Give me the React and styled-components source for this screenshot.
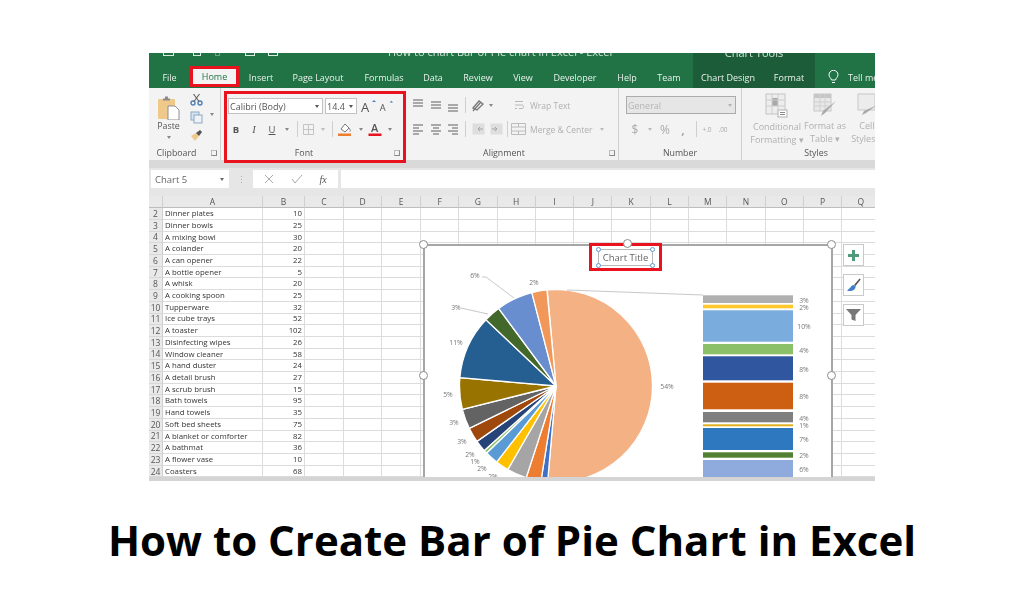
import { Fragment } from "react";
import styled, { createGlobalStyle } from "styled-components";

const GlobalStyle = createGlobalStyle`
  html, body {
    margin: 0;
    padding: 0;
    background: #fff;
  }
  * {
    box-sizing: border-box;
  }
`;

const RED = "#e8131f";
const GREEN = "#217346";
const DARK_GREEN = "#1c5c39";

const Page = styled.div`
  width: 1024px;
  height: 613px;
  padding-top: 53px;
  display: flex;
  flex-direction: column;
  align-items: center;
  overflow: hidden;
  font-family: "Open Sans", sans-serif;
`;

const Shot = styled.div`
  width: 726px;
  height: 428px;
  flex: none;
  overflow: hidden;
  display: flex;
  flex-direction: column;
  background: #e6e6e6;
  filter: blur(0.7px);
`;

const Heading = styled.h1`
  margin: 36px 0 0;
  font-size: 42px;
  line-height: 46px;
  font-weight: 700;
  color: #000;
  white-space: nowrap;
`;

const TitleBar = styled.div`
  height: 13px;
  flex: none;
  display: flex;
  background: ${GREEN};
  overflow: hidden;
  color: #cfe3d7;
  font-size: 11px;
  line-height: 6px;
`;

const QuickIcons = styled.div`
  width: 239px;
  display: flex;
  padding-left: 14px;
  flex: none;
`;

const QuickMark = styled.span`
  width: ${(p) => p.$w}px;
  height: 3px;
  margin-left: ${(p) => p.$gap || 0}px;
  border: 1px solid ${(p) => (p.$dim ? "#6fa287" : "#dcebe2")};
  border-top: 0;
`;

const WindowTitle = styled.div`
  width: 305px;
  flex: none;
  margin-top: -4px;
  white-space: nowrap;
`;

const ToolsTitle = styled.div`
  width: 122px;
  flex: none;
  padding-top: 0;
  text-align: center;
  background: ${DARK_GREEN};
  line-height: 0;
`;

const TabBar = styled.div`
  height: 22px;
  flex: none;
  display: flex;
  background: ${GREEN};
`;

const Tab = styled.div`
  width: ${(p) => p.$w}px;
  flex: none;
  display: flex;
  align-items: center;
  justify-content: center;
  font-size: 9px;
  color: #e9f2ed;
  white-space: nowrap;
  background: ${(p) => (p.$tool ? DARK_GREEN : "transparent")};
`;

const HomeTab = styled(Tab)`
  height: 21px;
  background: #f3f3f3;
  color: ${GREEN};
  border: 3px solid ${RED};
  position: relative;
  z-index: 2;
`;

const TellMe = styled.div`
  display: flex;
  align-items: center;
  gap: 9px;
  padding-left: 13px;
  color: #e9f2ed;
  font-size: 9px;
  white-space: nowrap;
`;

const Ribbon = styled.div`
  height: 72px;
  flex: none;
  display: flex;
  background: #f3f3f3;
  color: #444;
`;

const Group = styled.div`
  width: ${(p) => p.$w}px;
  height: 72px;
  flex: none;
  display: flex;
  flex-direction: column;
  padding-top: ${(p) => p.$top ?? 8}px;
  border-right: ${(p) => (p.$line ? "1px solid #cfcfcf" : "0")};
`;

const FontGroup = styled(Group)`
  margin: 3px 0 0 3px;
  padding: 4px 0 0;
  border: 3px solid ${RED};
  position: relative;
  z-index: 2;
  background: #f3f3f3;
`;

const GroupLabel = styled.div`
  margin-top: auto;
  height: 14px;
  display: grid;
  grid-template-columns: 0 1fr ${(p) => p.$right ?? 16}px;
  align-items: center;
  text-align: center;
  font-size: 8.8px;
  color: #555;
`;

const Launcher = styled.span`
  justify-self: end;
  margin-right: 3px;
  width: 6px;
  height: 6px;
  border-left: 1px solid #bbb;
  border-top: 1px solid #bbb;
  border-right: 1px solid #888;
  border-bottom: 1px solid #888;
`;

const ToolRow = styled.div`
  height: ${(p) => p.$h || 18}px;
  flex: none;
  display: flex;
  align-items: center;
  padding-left: ${(p) => p.$left || 0}px;
  margin-top: ${(p) => p.$gap || 0}px;
`;

const Cell = styled.div`
  width: ${(p) => p.$w}px;
  flex: none;
  display: flex;
  align-items: center;
  justify-content: center;
  font-family: ${(p) => (p.$serif ? '"Liberation Serif", serif' : "inherit")};
  font-size: ${(p) => p.$size || 10}px;
  font-weight: ${(p) => (p.$bold ? 700 : 400)};
  font-style: ${(p) => (p.$italic ? "italic" : "normal")};
  text-decoration: ${(p) => (p.$under ? "underline" : "none")};
  color: ${(p) => p.$color || "#555"};
`;

const Caret = styled.span`
  width: 0;
  height: 0;
  border-left: 2.5px solid transparent;
  border-right: 2.5px solid transparent;
  border-top: 3px solid ${(p) => p.$color || "#888"};
`;

const ToolSep = styled.span`
  width: 1px;
  height: 16px;
  background: #cfcfcf;
`;

const Select = styled.div`
  width: ${(p) => p.$w}px;
  height: ${(p) => p.$h || 16}px;
  flex: none;
  margin-right: ${(p) => p.$gap || 0}px;
  display: flex;
  align-items: center;
  justify-content: space-between;
  padding: 0 3px 0 1px;
  background: ${(p) => (p.$off ? "#e6e6e6" : "#fff")};
  border: 1px solid ${(p) => (p.$off ? "#ababab" : "#c2c2c2")};
  font-size: 9px;
  color: ${(p) => (p.$off ? "#b4b4b4" : "#555")};
  white-space: nowrap;
`;

const DimText = styled.div`
  display: flex;
  align-items: center;
  width: ${(p) => p.$w}px;
  flex: none;
  justify-content: space-between;
  margin-left: 3px;
  padding-right: 9px;
  font-size: 8.5px;
  color: #b0b0b0;
  white-space: nowrap;
`;

const ClipboardBody = styled.div`
  display: grid;
  grid-template-columns: 37px 18px 14px;
  padding-left: 1px;
`;

const PasteButton = styled.div`
  display: flex;
  flex-direction: column;
  align-items: center;
  padding-top: 3px;
  font-size: 8.8px;
  line-height: 12px;
  color: #555;
`;

const PasteCaret = styled(Caret)`
  margin-top: 4px;
`;

const SmallTools = styled.div`
  display: flex;
  flex-direction: column;
  align-items: center;
  gap: 5px;
  grid-column: 2;
`;

const SmallCaret = styled.div`
  display: flex;
  align-items: center;
  justify-content: center;
  padding-bottom: 7px;
`;

const BigTools = styled.div`
  display: flex;
  padding-left: ${(p) => p.$left}px;
`;

const BigTool = styled.div`
  width: ${(p) => p.$w}px;
  flex: none;
  display: flex;
  flex-direction: column;
  align-items: center;
  font-size: 9px;
  line-height: 13px;
  color: #b0b0b0;
  white-space: nowrap;
`;

const BigLabel = styled.div`
  margin-top: 2px;
  display: flex;
  flex-direction: column;
  align-items: center;
`;

const Strip = styled.div`
  height: 8px;
  flex: none;
  background: #d9d9d9;
`;

const FormulaBar = styled.div`
  height: 20px;
  flex: none;
  display: flex;
  align-items: flex-start;
  padding: 2px 0 0 2px;
  background: #e6e6e6;
`;

const NameBox = styled.div`
  width: 78px;
  height: 18px;
  flex: none;
  display: flex;
  align-items: center;
  justify-content: space-between;
  padding: 0 5px 0 4px;
  background: #fff;
  font-size: 9.5px;
  color: #666;
`;

const GripDots = styled.div`
  width: 24px;
  height: 18px;
  flex: none;
  display: flex;
  align-items: center;
  justify-content: center;
  color: #aaa;
  font-size: 9px;
`;

const FnBox = styled.div`
  width: 85px;
  height: 18px;
  flex: none;
  display: flex;
  align-items: center;
  justify-content: space-around;
  padding: 0 3px;
  background: #fff;
  margin-right: 3px;
  color: #aaa;
`;

const FnLabel = styled.span`
  font-family: "Liberation Serif", serif;
  font-style: italic;
  font-size: 10px;
  color: #555;
`;

const FormulaInput = styled.div`
  flex: 1;
  height: 18px;
  background: #fff;
`;

const Gap = styled.div`
  height: 8px;
  flex: none;
`;

const Sheet = styled.div`
  position: relative;
  height: 281px;
  flex: none;
  background: #fff;
`;

const Grid = styled.div`
  display: grid;
  grid-template-columns: 14px 100px 42px 39px 38px 39px repeat(12, 38.3px);
  grid-template-rows: 12.2px repeat(23, 11.71px);
  height: 281px;
`;

const ColHead = styled.div`
  background: #e9e9e9;
  border-right: 1px solid #cfcfcf;
  border-bottom: 1px solid #bdbdbd;
  display: flex;
  align-items: center;
  justify-content: center;
  font-size: 8.5px;
  color: #555;
`;

const RowHead = styled(ColHead)`
  border-bottom: 1px solid #d8d8d8;
  font-size: 8.5px;
`;

const DataCell = styled.div`
  border-right: 1px solid #dcdcdc;
  border-bottom: 1px solid #dcdcdc;
  padding: 1px 2px 0;
  display: flex;
  align-items: center;
  justify-content: ${(p) => (p.$num ? "flex-end" : "flex-start")};
  font-size: 7.8px;
  line-height: 1;
  color: #333;
  white-space: nowrap;
`;

const ScrollBar = styled.div`
  height: 4px;
  flex: none;
  background: #d4d4d4;
`;

const Chart = styled.div`
  position: absolute;
  left: 274px;
  top: 48px;
  width: 410px;
  height: 233px;
  background: #fff;
  border: 2px solid #a6a6a6;
  border-bottom: 0;
`;

const ChartSvg = styled.svg`
  display: block;
  width: 406px;
  height: 231px;
`;

const Handle = styled.span`
  position: absolute;
  left: ${(p) => p.$x}px;
  top: ${(p) => p.$y}px;
  width: 9px;
  height: 9px;
  border-radius: 50%;
  background: #fff;
  border: 1.5px solid #8c8c8c;
`;

const TitleMark = styled.div`
  position: absolute;
  left: 164px;
  top: -3px;
  width: 73px;
  height: 28px;
  border: 3px solid ${RED};
  display: flex;
  align-items: center;
  justify-content: center;
`;

const TitleBox = styled.div`
  position: relative;
  width: 55px;
  height: 17px;
  border: 1px solid #b8b8b8;
  display: flex;
  align-items: center;
  justify-content: center;
  font-size: 9.5px;
  color: #666;
  white-space: nowrap;
`;

const TitleGrip = styled.span`
  position: absolute;
  left: ${(p) => p.$x}px;
  top: ${(p) => p.$y}px;
  width: 5px;
  height: 5px;
  border-radius: 50%;
  background: #fff;
  border: 1px solid #5b9bd5;
`;

const SideTools = styled.div`
  position: absolute;
  left: 694px;
  top: 48px;
  display: flex;
  flex-direction: column;
  gap: 8px;
`;

const SideButton = styled.div`
  width: 21px;
  height: 22px;
  background: #fff;
  border: 1px solid #c9c9c9;
  display: flex;
  align-items: center;
  justify-content: center;
`;

const ROWS = [
  ["Dinner plates", 10],
  ["Dinner bowls", 25],
  ["A mixing bowl", 30],
  ["A colander", 20],
  ["A can opener", 22],
  ["A bottle opener", 5],
  ["A whisk", 20],
  ["A cooking spoon", 25],
  ["Tupperware", 32],
  ["Ice cube trays", 52],
  ["A toaster", 102],
  ["Disinfecting wipes", 26],
  ["Window cleaner", 58],
  ["A hand duster", 24],
  ["A detail brush", 27],
  ["A scrub brush", 15],
  ["Bath towels", 95],
  ["Hand towels", 35],
  ["Soft bed sheets", 75],
  ["A blanket or comforter", 82],
  ["A bathmat", 36],
  ["A flower vase", 10],
  ["Coasters", 68],
];

const COLS = "ABCDEFGHIJKLMNOPQ".split("");

// clockwise degrees from north, measured off the picture
const WEDGES = [
  [-5.2, 185, "#f4b183"],
  [185, 189, "#3f72c6"],
  [189, 198, "#ed7d31"],
  [198, 210, "#a5a5a5"],
  [210, 218, "#ffc000"],
  [218, 226, "#5b9bd5"],
  [226, 228, "#8fc06c"],
  [228, 235, "#264478"],
  [235, 244, "#9e480e"],
  [244, 256, "#636363"],
  [256, 275, "#997300"],
  [275, 313.4, "#255e91"],
  [313.4, 323.5, "#43682b"],
  [323.5, 345.5, "#698ed0"],
  [345.5, 354.6, "#f1975a"],
];

const PIE_LABELS = [
  ["6%", 475, 275],
  ["2%", 534, 282],
  ["3%", 456, 307],
  ["11%", 456, 342],
  ["5%", 448, 394],
  ["3%", 454, 422],
  ["3%", 462, 441],
  ["2%", 470, 454],
  ["1%", 475, 461],
  ["2%", 482, 468],
  ["2%", 493, 476],
  ["54%", 667, 386],
];

const BARS = [
  [295.3, 303, "#b0b0b0", "3%", 300],
  [304.7, 308.3, "#ffc92e", "2%", 307],
  [310.3, 341.7, "#7aaddd", "10%", 326],
  [344, 354.3, "#8cc068", "4%", 350],
  [356.3, 380.3, "#2f569e", "8%", 369],
  [382.7, 409.3, "#cc5f12", "8%", 396.7],
  [412, 422.3, "#7f7f7f", "4%", 418],
  [424.3, 426.3, "#e0b020", "1%", 425.7],
  [428, 450, "#2e78c0", "7%", 439.7],
  [452.3, 457.7, "#548235", "2%", 455.3],
  [460, 477, "#8faadc", "6%", 469],
];

const wedgePath = (from, to) => {
  const cx = 556;
  const cy = 386;
  const r = 96.5;
  const pt = (a) => {
    const t = (a * Math.PI) / 180;
    return `${(cx + r * Math.sin(t)).toFixed(2)} ${(cy - r * Math.cos(t)).toFixed(2)}`;
  };
  const large = to - from > 180 ? 1 : 0;
  return `M${cx} ${cy}L${pt(from)}A${r} ${r} 0 ${large} 1 ${pt(to)}Z`;
};

const Lines = ({ w = 12, align = "left", color = "#888" }) => {
  const rows = align === "top" ? [1, 4, 7] : align === "mid" ? [3, 6, 9] : align === "low" ? [6, 9, 12] : [2, 5, 8, 11];
  return (
    <svg width={w} height="13" viewBox="0 0 12 13">
      {rows.map((y, i) => {
        let x1 = 1;
        let x2 = 11;
        if (rows.length === 4 && i % 2 === 1) {
          if (align === "left") x2 = 7;
          if (align === "center") { x1 = 3; x2 = 9; }
          if (align === "right") x1 = 5;
        }
        return <path key={y} d={`M${x1} ${y}H${x2}`} stroke={color} strokeWidth="1.4" />;
      })}
    </svg>
  );
};

const PasteIcon = () => (
  <svg width="24" height="24" viewBox="0 0 24 24">
    <rect x="1" y="3" width="17" height="20" rx="1" fill="#eec98a" />
    <path d="M6 4.500h7V2.500h-2V.500H8v2H6z" fill="#8a8a8a" />
    <path d="M11 10h7l4 4v10H11z" fill="#fff" stroke="#8f8f8f" />
  </svg>
);

const ScissorsIcon = () => (
  <svg width="13" height="13" viewBox="0 0 13 13" fill="none" stroke="#4f7fb8" strokeWidth="1.4">
    <circle cx="3" cy="10" r="2" />
    <circle cx="10" cy="10" r="2" />
    <path d="M4 8.500 9.500 1M9 8.500 3.500 1" stroke="#666" strokeWidth="1.2" />
  </svg>
);

const CopyIcon = () => (
  <svg width="13" height="13" viewBox="0 0 13 13">
    <rect x="1" y="1" width="8" height="8" fill="#d7e4f2" stroke="#8ea8c4" />
    <rect x="4" y="4" width="8" height="8" fill="#eef2f7" stroke="#8ea8c4" />
  </svg>
);

const PainterIcon = () => (
  <svg width="13" height="13" viewBox="0 0 13 13">
    <path d="M1 7l5-3 3 3-4 5z" fill="#eec98a" />
    <path d="M6 4l4-3 2 2-3 4z" fill="#555" />
  </svg>
);

const GrowA = ({ size, color = "#4a7fc0" }) => (
  <svg width="18" height="14" viewBox="0 0 18 14">
    <text x="2" y="12.5" fontFamily="Open Sans" fontSize={size} fill="#555">A</text>
    <path d="M13 3l2-2 2 2z" fill={color} />
  </svg>
);

const BordersIcon = () => (
  <svg width="11" height="11" viewBox="0 0 11 11" fill="none" stroke="#c4c4c4">
    <path d="M.5.5h10v10H.5zM5.5.5v10M.5 5.5h10" />
  </svg>
);

const FillIcon = () => (
  <svg width="14" height="14" viewBox="0 0 14 14">
    <path d="M3 7 7 2l4 4-4 4z" fill="#fff" stroke="#777" />
    <path d="M11 6c1 1.500 2 2.500 1 3.500" stroke="#888" fill="none" />
    <rect x="0" y="11.500" width="13" height="2.500" fill="#ed7d31" />
  </svg>
);

const FontColorIcon = () => (
  <svg width="14" height="14" viewBox="0 0 14 14">
    <text x="3" y="10" fontFamily="Open Sans" fontSize="11" fontWeight="600" fill="#555">A</text>
    <rect x="0.500" y="11.500" width="13" height="2.500" fill={RED} />
  </svg>
);

const OrientIcon = () => (
  <svg width="14" height="13" viewBox="0 0 14 13" fill="none" stroke="#777" strokeWidth="1.3">
    <path d="M2 9 8 2l4 3-6 6zM2 12l8-9" />
  </svg>
);

const IndentIcon = ({ flip }) => (
  <svg width="13" height="12" viewBox="0 0 13 12" fill="#dedede" stroke="#a5a5a5">
    <rect x=".5" y=".5" width="12" height="11" stroke="none" />
    <path fill="none" d={flip ? "M2 6h5M5 4l2 2-2 2" : "M11 6H6M8 4 6 6l2 2"} />
  </svg>
);

const WrapIcon = () => (
  <svg width="12" height="12" viewBox="0 0 12 12" fill="none" stroke="#b8b8b8">
    <path d="M2 2.500h8M2 6h7c2 0 2 3.500 0 3.500H6M2 9.500h2" />
  </svg>
);

const MergeIcon = () => (
  <svg width="15" height="12" viewBox="0 0 15 12" fill="none" stroke="#bcbcbc">
    <path d="M.5.500h14v11H.5zM.5 4h14M.5 8h14M7.500.500V4M7.500 8v3.500" />
  </svg>
);

const CondIcon = () => (
  <svg width="24" height="25" viewBox="0 0 24 25">
    <rect x="1" y="1" width="19" height="20" fill="#ededed" stroke="#c6c6c6" />
    <rect x="7" y="5" width="6" height="8" fill="#a8a8a8" />
    <rect x="13" y="17" width="9" height="7" fill="#fff" stroke="#b0b0b0" />
    <path d="M7 1v20M13 1v20M1 7h19M1 13h19" stroke="#cdcdcd" fill="none" />
    <path d="M15 19.500h5M15 21.500h5" stroke="#888" />
  </svg>
);

const TableIcon = () => (
  <svg width="24" height="24" viewBox="0 0 24 24">
    <rect x="1" y="1" width="17" height="17" fill="#e8e8e8" stroke="#c8c8c8" />
    <rect x="1" y="1" width="17" height="4" fill="#c6c6c6" />
    <path d="M7 1v17M12 1v17M1 9h17M1 13h17" stroke="#d0d0d0" />
    <path d="M23 8 12 20l-4 3 2-5z" fill="#a8a8a8" />
  </svg>
);

const StyleIcon = () => (
  <svg width="20" height="24" viewBox="0 0 20 24">
    <rect x="1" y="1" width="17" height="16" fill="#ececec" stroke="#c8c8c8" />
    <path d="M20 12 9 20l-4 2 2-4z" fill="#a8a8a8" />
  </svg>
);

const BrushIcon = () => (
  <svg width="16" height="16" viewBox="0 0 16 16">
    <path d="M8 8l5.500-6.500 1.200 1L9.500 9z" fill="#555" />
    <path d="M8 8c-3 0-3 3-7 5.500 4 1.500 8 0 8.800-4z" fill="#3f7fca" />
  </svg>
);

const App = () => {
  return (
    <Page>
      <GlobalStyle />
      <Shot>
        <TitleBar>
          <QuickIcons>
            <QuickMark $w={11} />
            <QuickMark $w={8} $gap={19} />
            <QuickMark $w={5} $gap={14} $dim />
            <QuickMark $w={10} $gap={25} />
            <QuickMark $w={10} $gap={13} />
          </QuickIcons>
          <WindowTitle>How to chart Bar of Pie chart in Excel - Excel</WindowTitle>
          <ToolsTitle>Chart Tools</ToolsTitle>
        </TitleBar>

        <TabBar>
          <Tab $w={41}>File</Tab>
          <HomeTab $w={49}>Home</HomeTab>
          <Tab $w={44}>Insert</Tab>
          <Tab $w={70}>Page Layout</Tab>
          <Tab $w={62}>Formulas</Tab>
          <Tab $w={36}>Data</Tab>
          <Tab $w={54}>Review</Tab>
          <Tab $w={36}>View</Tab>
          <Tab $w={68}>Developer</Tab>
          <Tab $w={36}>Help</Tab>
          <Tab $w={48}>Team</Tab>
          <Tab $w={70} $tool>Chart Design</Tab>
          <Tab $w={52} $tool>Format</Tab>
          <TellMe>
            <svg width="11" height="14" viewBox="0 0 11 14" fill="none" stroke="#fff">
              <path d="M3.500 10C3 8 1 7 1 4.800a4.500 4.500 0 0 1 9 0C10 7 8 8 7.500 10zM4 12.500h3" />
            </svg>
            Tell me what
          </TellMe>
        </TabBar>

        <Ribbon>
          <Group $w={72} $top={5} $line>
            <ClipboardBody>
              <PasteButton>
                <PasteIcon />
                <span>Paste</span>
                <PasteCaret />
              </PasteButton>
              <SmallTools>
                <ScissorsIcon />
                <CopyIcon />
                <PainterIcon />
              </SmallTools>
              <SmallCaret>
                <Caret />
              </SmallCaret>
            </ClipboardBody>
            <GroupLabel>
              <span />
              Clipboard
              <Launcher />
            </GroupLabel>
          </Group>

          <FontGroup $w={182}>
            <ToolRow $h={16} $left={1}>
              <Select $w={95} $gap={2}>
                Calibri (Body)
                <Caret $color="#555" />
              </Select>
              <Select $w={32}>
                14.4
                <Caret $color="#555" />
              </Select>
              <Cell $w={21}><GrowA size={13} /></Cell>
              <Cell $w={16}><GrowA size={10.5} /></Cell>
            </ToolRow>
            <ToolRow $gap={6}>
              <Cell $w={18} $bold $size={9.5}>B</Cell>
              <Cell $w={18} $italic $serif $size={10.5}>I</Cell>
              <Cell $w={18} $under $size={9.5}>U</Cell>
              <Cell $w={12}><Caret /></Cell>
              <Cell $w={8}><ToolSep /></Cell>
              <Cell $w={15}><BordersIcon /></Cell>
              <Cell $w={14}><Caret $color="#bbb" /></Cell>
              <Cell $w={4}><ToolSep /></Cell>
              <Cell $w={22}><FillIcon /></Cell>
              <Cell $w={9}><Caret /></Cell>
              <Cell $w={20}><FontColorIcon /></Cell>
              <Cell $w={10}><Caret /></Cell>
            </ToolRow>
            <GroupLabel $right={22}>
              <span />
              Font
              <Launcher />
            </GroupLabel>
          </FontGroup>

          <Group $w={213} $line>
            <ToolRow $left={2}>
              <Cell $w={19}><Lines align="top" /></Cell>
              <Cell $w={17}><Lines align="mid" /></Cell>
              <Cell $w={18}><Lines align="low" /></Cell>
              <Cell $w={6}><ToolSep /></Cell>
              <Cell $w={20}><OrientIcon /></Cell>
              <Cell $w={6}><Caret /></Cell>
              <Cell $w={16} />
              <Cell $w={17}><WrapIcon /></Cell>
              <DimText $w={70}>Wrap Text</DimText>
            </ToolRow>
            <ToolRow $left={2} $gap={6}>
              <Cell $w={19}><Lines align="left" /></Cell>
              <Cell $w={17}><Lines align="center" /></Cell>
              <Cell $w={18}><Lines align="right" /></Cell>
              <Cell $w={6}><ToolSep /></Cell>
              <Cell $w={20}><IndentIcon /></Cell>
              <Cell $w={16}><IndentIcon flip /></Cell>
              <Cell $w={6}><ToolSep /></Cell>
              <Cell $w={17}><MergeIcon /></Cell>
              <DimText $w={83}>
                Merge &amp; Center
                <Caret $color="#bbb" />
              </DimText>
            </ToolRow>
            <GroupLabel>
              <span />
              Alignment
              <Launcher />
            </GroupLabel>
          </Group>

          <Group $w={123} $line>
            <ToolRow $left={7}>
              <Select $w={110} $h={18} $off>
                General
                <Caret $color="#b4b4b4" />
              </Select>
            </ToolRow>
            <ToolRow $left={7} $gap={6}>
              <Cell $w={18} $size={12} $color="#aaa">$</Cell>
              <Cell $w={12}><Caret $color="#bbb" /></Cell>
              <Cell $w={18} $size={12} $color="#aaa">%</Cell>
              <Cell $w={18} $size={12} $bold $color="#aaa">,</Cell>
              <Cell $w={8}><ToolSep /></Cell>
              <Cell $w={14} $size={6.5} $color="#aaa">+.0</Cell>
              <Cell $w={2} />
              <Cell $w={14} $size={6.5} $color="#aaa">.00</Cell>
            </ToolRow>
            <GroupLabel $right={0}>
              <span />
              Number
              <span />
            </GroupLabel>
          </Group>

          <Group $w={148} $top={5}>
            <BigTools $left={10}>
              <BigTool $w={50}>
                <CondIcon />
                <BigLabel>
                  <span>Conditional</span>
                  <span>Formatting ▾</span>
                </BigLabel>
              </BigTool>
              <BigTool $w={46}>
                <TableIcon />
                <BigLabel>
                  <span>Format as</span>
                  <span>Table ▾</span>
                </BigLabel>
              </BigTool>
              <BigTool $w={38}>
                <StyleIcon />
                <BigLabel>
                  <span>Cell</span>
                  <span>Styles ▾</span>
                </BigLabel>
              </BigTool>
            </BigTools>
            <GroupLabel $right={0}>
              <span />
              Styles
              <span />
            </GroupLabel>
          </Group>
        </Ribbon>

        <Strip />

        <FormulaBar>
          <NameBox>
            Chart 5
            <Caret $color="#666" />
          </NameBox>
          <GripDots>⋮</GripDots>
          <FnBox>
            <svg width="10" height="10" viewBox="0 0 10 10" stroke="#aaa" fill="none"><path d="M1 1l8 8M9 1 1 9" /></svg>
            <svg width="12" height="10" viewBox="0 0 12 10" stroke="#aaa" fill="none"><path d="M1 5l3 4 7-8" /></svg>
            <FnLabel>fx</FnLabel>
          </FnBox>
          <FormulaInput />
        </FormulaBar>

        <Gap />

        <Sheet>
          <Grid>
            <ColHead />
            {COLS.map((c) => (
              <ColHead key={c}>{c}</ColHead>
            ))}
            {ROWS.map(([name, qty], i) => (
              <Fragment key={name}>
                <RowHead>{i + 2}</RowHead>
                <DataCell>{name}</DataCell>
                <DataCell $num>{qty}</DataCell>
                {COLS.slice(2).map((c) => (
                  <DataCell key={c} />
                ))}
              </Fragment>
            ))}
          </Grid>

          <Chart>
            <ChartSvg viewBox="425 246 406 231">
              {WEDGES.map(([from, to, color]) => (
                <path key={from} d={wedgePath(from, to)} fill={color} stroke="#fff" strokeWidth="1.3" />
              ))}
              <g fill="none" stroke="#c8c8c8" strokeWidth="1">
                <path d="M482 277h4l28 21" />
                <path d="M461 308l27 6" />
                <path d="M567 290l136 5" />
              </g>
              {BARS.map(([y1, y2, color]) => (
                <rect key={y1} x="703" y={y1} width="90" height={y2 - y1} fill={color} />
              ))}
              <g fontFamily="Open Sans" fontSize="6.800" fill="#777" textAnchor="middle" dominantBaseline="central">
                {PIE_LABELS.map(([text, x, y]) => (
                  <text key={`${x}-${y}`} x={x} y={y}>{text}</text>
                ))}
                {BARS.map(([y1, , , text, y]) => (
                  <text key={y1} x="804" y={y}>{text}</text>
                ))}
              </g>
            </ChartSvg>
            <TitleMark>
              <TitleBox>
                Chart Title
                <TitleGrip $x={-3} $y={-3} />
                <TitleGrip $x={51} $y={-3} />
                <TitleGrip $x={-3} $y={13} />
                <TitleGrip $x={51} $y={13} />
              </TitleBox>
            </TitleMark>
            <Handle $x={-6} $y={-6} />
            <Handle $x={198} $y={-7} />
            <Handle $x={402} $y={-6} />
            <Handle $x={-6} $y={125} />
            <Handle $x={402} $y={125} />
          </Chart>

          <SideTools>
            <SideButton>
              <svg width="13" height="13" viewBox="0 0 13 13"><path d="M5 1h3v4h4v3H8v4H5V8H1V5h4z" fill="#4e9a7a" /></svg>
            </SideButton>
            <SideButton>
              <BrushIcon />
            </SideButton>
            <SideButton>
              <svg width="15" height="14" viewBox="0 0 15 14"><path d="M0 1h15L9.500 7v6l-4-1.500V7z" fill="#777" /></svg>
            </SideButton>
          </SideTools>
        </Sheet>

        <ScrollBar />
      </Shot>
      <Heading>How to Create Bar of Pie Chart in Excel</Heading>
    </Page>
  );
};

export default App;
